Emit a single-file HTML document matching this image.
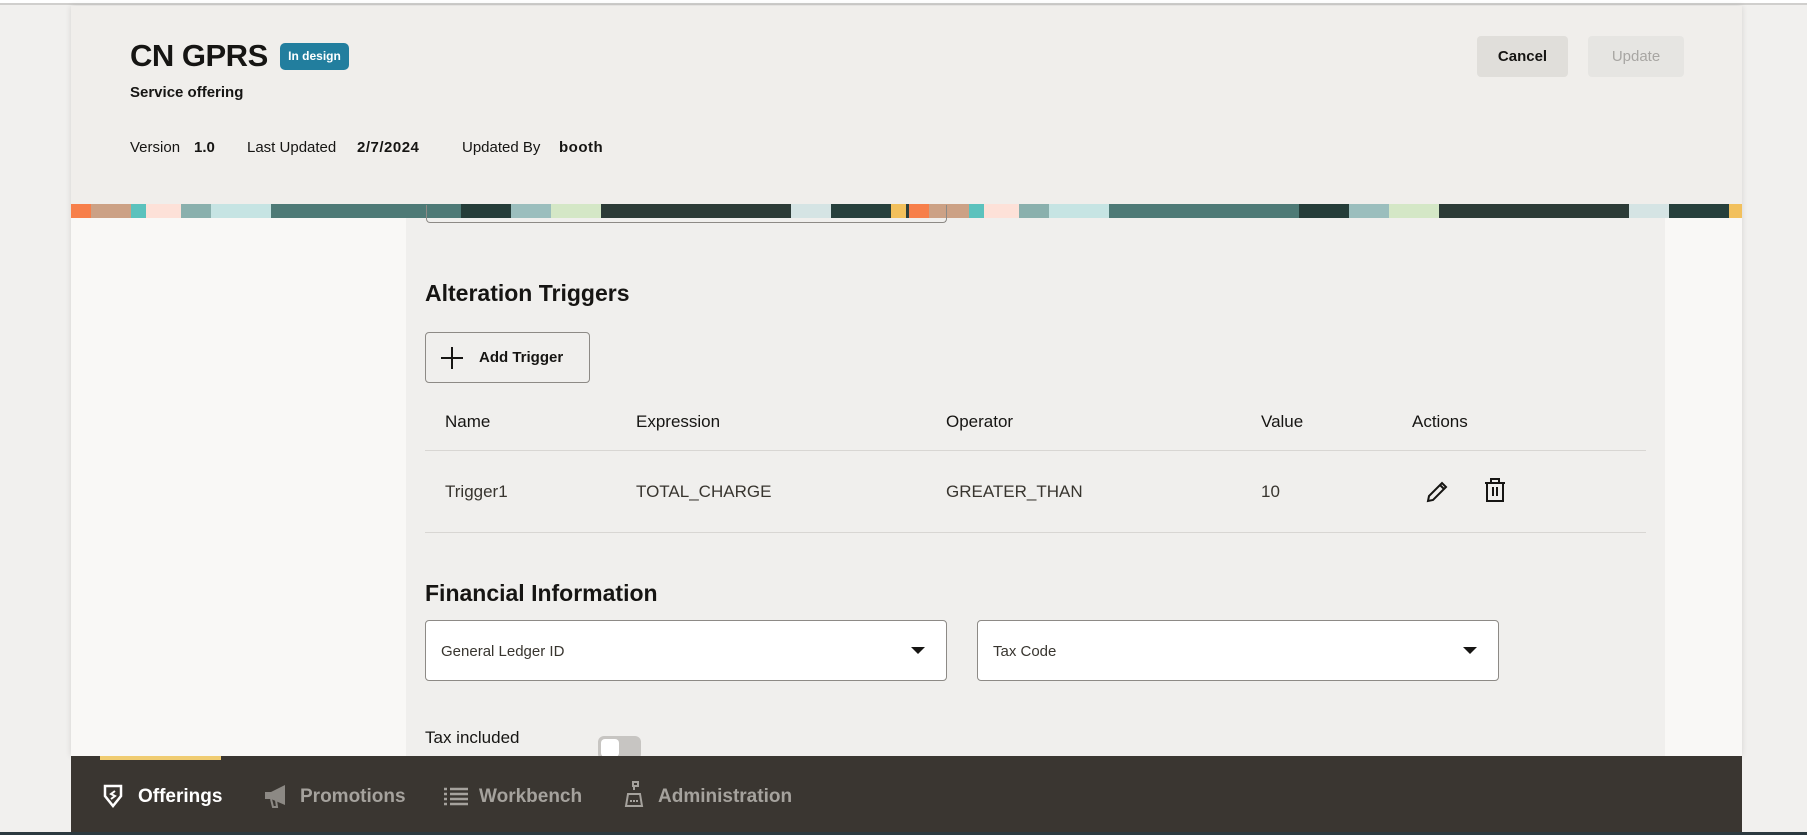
<!DOCTYPE html>
<html><head><meta charset="utf-8"><style>
*{margin:0;padding:0;box-sizing:border-box}
body{width:1807px;height:835px;overflow:hidden;background:#f1f0ee;font-family:"Liberation Sans",sans-serif;color:#161513;position:relative}
.a{position:absolute;white-space:nowrap}
</style></head><body>
<div class="a" style="left:0;top:0;width:1807px;height:5px;background:#fff;border-bottom:2px solid #d0cfcd"></div>
<div class="a" style="left:71px;top:6px;width:1671px;height:750px;background:#f9f8f6;box-shadow:0 0 6px rgba(0,0,0,.12)"></div>
<div class="a" style="left:71px;top:6px;width:1671px;height:198px;background:#f0eeeb"></div>
<div class="a" style="left:130px;top:38px;font-size:31px;font-weight:bold;letter-spacing:-0.5px">CN GPRS</div>
<div class="a" style="left:280px;top:43px;width:69px;height:27px;background:#227e9e;border-radius:5px;color:#fff;font-size:12px;font-weight:bold;text-align:center;line-height:27px">In design</div>
<div class="a" style="left:130px;top:84px;font-size:15px;font-weight:bold">Service offering</div>
<div class="a" style="left:130px;top:139px;font-size:15px">Version</div>
<div class="a" style="left:194px;top:139px;font-size:15px;font-weight:bold">1.0</div>
<div class="a" style="left:247px;top:139px;font-size:15px">Last Updated</div>
<div class="a" style="left:357px;top:139px;font-size:15px;font-weight:bold;letter-spacing:0.5px">2/7/2024</div>
<div class="a" style="left:462px;top:139px;font-size:15px">Updated By</div>
<div class="a" style="left:559px;top:139px;font-size:15px;font-weight:bold;letter-spacing:0.5px">booth</div>
<div class="a" style="left:1477px;top:36px;width:91px;height:41px;background:#e0deda;border-radius:4px;font-size:15px;font-weight:bold;text-align:center;line-height:41px">Cancel</div>
<div class="a" style="left:1588px;top:36px;width:96px;height:41px;background:#e6e5e2;border-radius:4px;font-size:15px;color:#a8a6a3;text-align:center;line-height:41px">Update</div>
<div class="a" style="left:71px;top:204px;width:1671px;height:14px;background:linear-gradient(90deg,#f77f4a 0,#f77f4a 20px,#cca185 20px,#cca185 60px,#5cc2bd 60px,#5cc2bd 75px,#fde1d8 75px,#fde1d8 110px,#8ab0ad 110px,#8ab0ad 140px,#c6e4e3 140px,#c6e4e3 200px,#4e7a76 200px,#4e7a76 390px,#253d39 390px,#253d39 440px,#9bbebd 440px,#9bbebd 480px,#d4e7c6 480px,#d4e7c6 530px,#2c3b37 530px,#2c3b37 720px,#d5e4e4 720px,#d5e4e4 760px,#27403c 760px,#27403c 820px,#f2c05c 820px,#f2c05c 835px,#2c3f3b 835px,#2c3f3b 838px);background-size:838px 14px"></div>
<div class="a" style="left:406px;top:218px;width:1259px;height:538px;background:#f0efed"></div>
<div class="a" style="left:426px;top:205px;width:521px;height:18px;border:1px solid #8d8a86;border-top:none;border-radius:0 0 4px 4px;background:transparent"></div>
<div class="a" style="left:425px;top:280px;font-size:23px;font-weight:bold">Alteration Triggers</div>
<div class="a" style="left:425px;top:332px;width:165px;height:51px;border:1px solid #8d8a86;border-radius:4px"></div>
<svg class="a" style="left:440px;top:346px" width="24" height="24"><path d="M12 1v22M1 12h22" stroke="#161513" stroke-width="2"/></svg>
<div class="a" style="left:479px;top:349px;font-size:15px;font-weight:bold">Add Trigger</div>
<div class="a" style="left:445px;top:412px;font-size:17px">Name</div>
<div class="a" style="left:636px;top:412px;font-size:17px">Expression</div>
<div class="a" style="left:946px;top:412px;font-size:17px">Operator</div>
<div class="a" style="left:1261px;top:412px;font-size:17px">Value</div>
<div class="a" style="left:1412px;top:412px;font-size:17px">Actions</div>
<div class="a" style="left:425px;top:450px;width:1221px;height:1px;background:#d8d6d3"></div>
<div class="a" style="left:445px;top:482px;font-size:17px;color:#38352f">Trigger1</div>
<div class="a" style="left:636px;top:482px;font-size:17px;color:#38352f">TOTAL_CHARGE</div>
<div class="a" style="left:946px;top:482px;font-size:17px;color:#38352f">GREATER_THAN</div>
<div class="a" style="left:1261px;top:482px;font-size:17px;color:#38352f">10</div>
<svg class="a" style="left:1424px;top:479px" width="26" height="26"><path d="M4 22l1-5L18 4l4 4L9 21z M16 6l4 4" fill="none" stroke="#161513" stroke-width="2"/></svg>
<svg class="a" style="left:1482px;top:477px" width="26" height="26"><path d="M3 6h20M9 6V2h8v4M5 6v18h16V6M11 10v9M15 10v9" fill="none" stroke="#161513" stroke-width="2"/></svg>
<div class="a" style="left:425px;top:532px;width:1221px;height:1px;background:#d8d6d3"></div>
<div class="a" style="left:425px;top:580px;font-size:23px;font-weight:bold">Financial Information</div>
<div class="a" style="left:425px;top:620px;width:522px;height:61px;border:1px solid #8d8a86;border-radius:4px;background:#fff"></div>
<div class="a" style="left:441px;top:643px;font-size:15px;color:#38352f">General Ledger ID</div>
<div class="a" style="left:911px;top:647px;border-left:7px solid transparent;border-right:7px solid transparent;border-top:7px solid #161513"></div>
<div class="a" style="left:977px;top:620px;width:522px;height:61px;border:1px solid #8d8a86;border-radius:4px;background:#fff"></div>
<div class="a" style="left:993px;top:643px;font-size:15px;color:#38352f">Tax Code</div>
<div class="a" style="left:1463px;top:647px;border-left:7px solid transparent;border-right:7px solid transparent;border-top:7px solid #161513"></div>
<div class="a" style="left:425px;top:728px;font-size:17px">Tax included</div>
<div class="a" style="left:598px;top:736px;width:43px;height:24px;border-radius:6px;background:#c7c5c2"></div>
<div class="a" style="left:601px;top:739px;width:18px;height:18px;border-radius:4px;background:#fff"></div>
<div class="a" style="left:71px;top:756px;width:1671px;height:76px;background:#3a3631"></div>
<div class="a" style="left:100px;top:756px;width:121px;height:4px;background:#f0cc71"></div>
<div class="a" style="left:0;top:832px;width:1807px;height:3px;background:#2c3a40"></div>
<svg class="a" style="left:101px;top:783px" width="24" height="26"><path d="M4 3h16v10l-8 10-8-10z" fill="none" stroke="#fff" stroke-width="2.5"/><path d="M14 8l-4 3 4 2-4 3" fill="none" stroke="#fff" stroke-width="2"/></svg>
<div class="a" style="left:138px;top:786px;font-size:19px;font-weight:bold;color:#fff">Offerings</div>
<svg class="a" style="left:263px;top:783px" width="28" height="26"><path d="M2 9h6l14-7v20L8 16H2z" fill="#8c8984"/><path d="M8 16l2 8h4l-1-7" fill="none" stroke="#8c8984" stroke-width="2"/></svg>
<div class="a" style="left:300px;top:786px;font-size:19px;font-weight:bold;color:#a5a29d">Promotions</div>
<svg class="a" style="left:444px;top:787px" width="24" height="20"><path d="M0 2h3M6 2h18M0 7h3M6 7h18M0 12h3M6 12h18M0 17h3M6 17h18" stroke="#a5a29d" stroke-width="2.5"/></svg>
<div class="a" style="left:479px;top:786px;font-size:19px;font-weight:bold;color:#a5a29d">Workbench</div>
<svg class="a" style="left:622px;top:780px" width="24" height="30"><path d="M11 2h5v4h-5zM12 6v4M4 26l2-12h12l2 12z" fill="none" stroke="#a5a29d" stroke-width="2"/><path d="M8 21h2M11 21h2M14 21h2" stroke="#a5a29d" stroke-width="2"/></svg>
<div class="a" style="left:658px;top:786px;font-size:19px;font-weight:bold;color:#a5a29d">Administration</div>
</body></html>
